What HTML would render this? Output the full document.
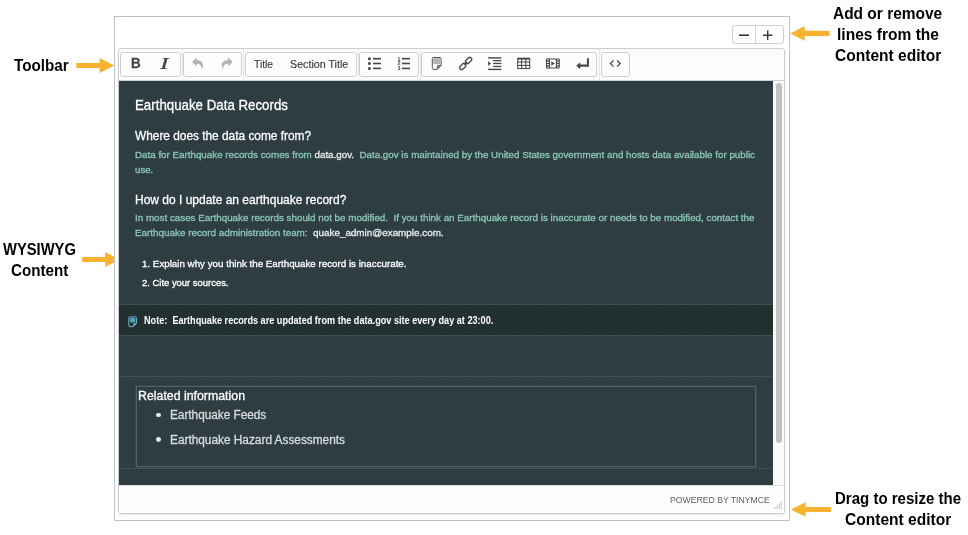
<!DOCTYPE html>
<html lang="en">
<head>
<meta charset="utf-8">
<title>Content editor</title>
<style>
html,body{margin:0;padding:0;background:#fff;}
body{width:968px;height:535px;position:relative;overflow:hidden;font-family:"Liberation Sans",sans-serif;}
#root{position:absolute;left:0;top:0;width:968px;height:535px;will-change:transform;}
.abs{position:absolute;box-sizing:border-box;}
.t{position:absolute;white-space:pre;line-height:1;transform-origin:0 50%;font-family:"Liberation Sans",sans-serif;}
#frame{left:114px;top:16px;width:676px;height:505px;border:1px solid #b9c3c8;background:#fff;}
#pm{left:732px;top:25px;width:52px;height:19px;border:1px solid #cfcfcf;border-radius:3px;background:#fff;}
#pm .div{position:absolute;left:22px;top:0;width:1px;height:17px;background:#d4d4d4;}
#editor{left:118px;top:48px;width:667px;height:466px;border:1px solid #cdcdcd;border-radius:3px;background:#fcfcfc;box-shadow:0 1px 2px rgba(0,0,0,0.12);}
#content{left:119px;top:81px;width:654px;height:404px;background:#2e3d41;}
#tbline{left:119px;top:80px;width:665px;height:1px;background:#cfcfcf;}
#scroll{left:773px;top:81px;width:11px;height:404px;background:#fafafa;}
#thumb{left:776px;top:83px;width:6px;height:360px;border-radius:3px;background:#c1c1c1;}
#status{left:119px;top:485px;width:665px;height:28px;background:#fcfcfc;border-top:1px solid #dcdcdc;}
.grp{position:absolute;box-sizing:border-box;top:52px;height:25px;border:1px solid #cfcfcf;border-radius:3px;background:#fdfdfd;}
.sep{position:absolute;top:49px;width:1px;height:31px;background:#e6e6e6;}
#note{left:119px;top:304px;width:654px;height:32px;background:#233032;}
.hline{position:absolute;left:119px;width:654px;height:1px;background:repeating-linear-gradient(90deg,#455356 0,#455356 2px,#3b494c 2px,#3b494c 3px);}
#rel{left:136px;top:386px;width:620px;height:81px;border:1px solid #536164;box-shadow:0 0 0 1px rgba(83,97,100,0.28);}
svg{position:absolute;overflow:visible;}
</style>
</head>
<body>
<div id="root">
<svg style="left:0;top:0" width="968" height="535" viewBox="0 0 968 535">
  <g fill="#f9b22e">
    <path d="M76.3 62.9H99.6V57.9L114.2 65.4L99.6 72.9V67.9H76.3Z"/>
    <path d="M82.2 256.9H105.2V251.9L119 259.4L105.2 266.9V261.9H82.2Z"/>
    <path d="M829.5 30.7H804.7V26.1L790.2 33.4L804.7 40.8V36.1H829.5Z"/>
    <path d="M830.9 507H805.6V502.2L790.8 509.5L805.6 516.8V512H830.9Z"/>
  </g>
</svg>

<div id="frame" class="abs"></div>

<!-- add / remove lines buttons -->
<div id="pm" class="abs"><div class="div"></div></div>
<svg style="left:732px;top:25px" width="52" height="19" viewBox="0 0 52 19">
  <path d="M7 10.2h10" stroke="#333" stroke-width="1.6" fill="none"/>
  <path d="M31 10.2h9.4M35.7 5.5v9.6" stroke="#333" stroke-width="1.4" fill="none"/>
</svg>

<!-- editor -->
<div id="editor" class="abs"></div>
<div id="tbline" class="abs"></div>
<div id="content" class="abs"></div>
<div id="scroll" class="abs"></div>
<div id="thumb" class="abs"></div>
<div id="status" class="abs"></div>

<!-- toolbar groups -->
<div class="grp" style="left:120px;width:61px"></div>
<div class="sep" style="left:182px"></div>
<div class="grp" style="left:183px;width:59px"></div>
<div class="sep" style="left:243px"></div>
<div class="grp" style="left:245px;width:112px"></div>
<div class="sep" style="left:358px"></div>
<div class="grp" style="left:359px;width:60px"></div>
<div class="sep" style="left:420px"></div>
<div class="grp" style="left:421px;width:176px"></div>
<div class="sep" style="left:599px"></div>
<div class="grp" style="left:601px;width:29px"></div>

<!-- content decorations -->
<div id="note" class="abs"></div>
<div class="hline" style="top:304px"></div>
<div class="hline" style="top:335px"></div>
<div class="hline" style="top:376px"></div>
<div class="hline" style="top:468px"></div>
<div id="rel" class="abs"></div>
<div class="abs" style="left:156px;top:412.5px;width:4.8px;height:4.8px;border-radius:50%;background:#e4e8e8"></div>
<div class="abs" style="left:156px;top:437.4px;width:4.8px;height:4.8px;border-radius:50%;background:#e4e8e8"></div>

<svg style="left:0;top:0" width="968" height="535" viewBox="0 0 968 535">
  <!-- undo / redo -->
  <g fill="#b3b3b3">
    <path transform="translate(192.1 57.3)" d="M0 4.6L4.6 0V2.9C8.6 2.9 11 5 11 8C11 9.8 10.3 11 9.4 12C9.8 9 8.4 6.4 4.6 6.4V9.2Z"/>
    <path transform="translate(232.7 57.3) scale(-1 1)" d="M0 4.6L4.6 0V2.9C8.6 2.9 11 5 11 8C11 9.8 10.3 11 9.4 12C9.8 9 8.4 6.4 4.6 6.4V9.2Z"/>
  </g>
  <!-- bullet list -->
  <g fill="#444" stroke="none">
    <circle cx="369.4" cy="58.7" r="1.5"/><circle cx="369.4" cy="63.5" r="1.5"/><circle cx="369.4" cy="68.4" r="1.5"/>
    <rect x="373" y="57.9" width="8" height="1.6"/><rect x="373" y="62.7" width="8" height="1.6"/><rect x="373" y="67.6" width="8" height="1.6"/>
  </g>
  <!-- numbered list -->
  <g fill="#444" stroke="none">
    <rect x="401.9" y="57.9" width="8.1" height="1.6"/><rect x="401.9" y="62.7" width="8.1" height="1.6"/><rect x="401.9" y="67.6" width="8.1" height="1.6"/>
    <g font-family="Liberation Sans, sans-serif" font-weight="700" font-size="5.4">
      <text x="397.4" y="60.6">1</text><text x="397.4" y="65.4">2</text><text x="397.4" y="70.3">3</text>
    </g>
  </g>
  <!-- note icon -->
  <g>
    <path d="M433.3 57.5H440.1Q441.1 57.5 441.1 58.5V65.3L437.2 69.4H433.3Q432.3 69.4 432.3 68.4V58.5Q432.3 57.5 433.3 57.5Z" fill="#fff" stroke="#555" stroke-width="1"/>
    <rect x="433.2" y="58.2" width="7.2" height="5.9" fill="#b4b4b4"/>
    <path d="M437.3 69.2V65.4H441Z" fill="#fff" stroke="#555" stroke-width="0.9" stroke-linejoin="round"/>
    <path d="M438.2 68.2L440.2 66.1H438.2Z" fill="#555"/>
  </g>
  <!-- link icon -->
  <g fill="none" stroke="#4a4a4a" stroke-width="1.3">
    <rect x="-3.6" y="-2" width="7.2" height="4" rx="2" transform="translate(468.6 60.5) rotate(-45)"/>
    <rect x="-3.6" y="-2" width="7.2" height="4" rx="2" transform="translate(462.8 66.5) rotate(-45)"/>
    <path d="M464.3 65L467.1 62.2" stroke-width="1.2"/>
  </g>
  <!-- indent -->
  <g fill="#444">
    <rect x="488.1" y="57.2" width="13.2" height="1.4"/>
    <rect x="493.2" y="60" width="8.1" height="1.3"/>
    <rect x="493.2" y="62.8" width="8.1" height="1.3"/>
    <rect x="493.2" y="65.8" width="8.1" height="1.3"/>
    <rect x="488.1" y="68.7" width="13.2" height="1.4"/>
    <path d="M488.1 61.2L491 63.5L488.1 65.8Z"/>
  </g>
  <!-- table -->
  <g fill="none" stroke="#444">
    <rect x="517.7" y="58.9" width="12" height="9.6" stroke-width="1"/>
    <path d="M517.2 58.5H530.2" stroke-width="1.6"/>
    <path d="M521.6 58.5V68.5M525.8 58.5V68.5M517.7 62H529.7M517.7 65.4H529.7" stroke-width="1"/>
  </g>
  <!-- media -->
  <g fill="none" stroke="#444" stroke-width="1.1">
    <rect x="546.5" y="59" width="12.7" height="9" rx="0.6"/>
    <path d="M549.4 59V68M556.4 59V68"/>
    <path d="M546.5 61.1H549.4M546.5 63.5H549.4M546.5 65.9H549.4M556.4 61.1H559.2M556.4 63.5H559.2M556.4 65.9H559.2" stroke-width="1.1"/>
    <path d="M551.3 61.3L554.8 63.5L551.3 65.7Z" fill="#444" stroke="none"/>
  </g>
  <!-- return -->
  <g fill="#444">
    <path d="M586.9 58.2H588.9V66.8H580.2V69.3L576.2 65.7L580.2 62.2V64.6H586.9Z"/>
  </g>
  <!-- code -->
  <g fill="none" stroke="#444" stroke-width="1.15">
    <path d="M613.6 60.5L610.3 63.5L613.6 66.6M617 60.5L620.3 63.5L617 66.6"/>
  </g>
  <!-- content note icon -->
  <g>
    <path d="M129.7 316.9H135.6Q136.5 316.9 136.5 317.8V323.3L133.3 326.6H129.7Q128.8 326.6 128.8 325.7V317.8Q128.8 316.9 129.7 316.9Z" fill="#243033" stroke="#6bb6cb" stroke-width="1"/>
    <rect x="130" y="318" width="5.4" height="4.4" fill="#5a9fb3"/>
    <path d="M133.3 326.4V323.3H136.4Z" fill="#6bb6cb"/>
  </g>
  <!-- resize grip -->
  <g fill="#b2b2b2">
    <rect x="780.6" y="501.6" width="1.2" height="1.2"/>
    <rect x="778.6" y="503.6" width="1.2" height="1.2"/><rect x="780.6" y="503.6" width="1.2" height="1.2"/>
    <rect x="776.6" y="505.6" width="1.2" height="1.2"/><rect x="778.6" y="505.6" width="1.2" height="1.2"/><rect x="780.6" y="505.6" width="1.2" height="1.2"/>
    <rect x="774.6" y="507.6" width="1.2" height="1.2"/><rect x="776.6" y="507.6" width="1.2" height="1.2"/><rect x="778.6" y="507.6" width="1.2" height="1.2"/><rect x="780.6" y="507.6" width="1.2" height="1.2"/>
  </g>
</svg>


<span class="t" style="left:135.0px;top:97.90px;font-size:14.3px;color:#ffffff;-webkit-text-stroke:0.3px;transform:scaleX(0.9300);">Earthquake Data Records</span>
<span class="t" style="left:135.0px;top:129.06px;font-size:13.4px;color:#ffffff;-webkit-text-stroke:0.3px;transform:scaleX(0.8856);">Where does the data come from?</span>
<span class="t" style="left:135.0px;top:149.79px;font-size:9.7px;color:#8cc7b6;-webkit-text-stroke:0.3px;transform:scaleX(1.0102);">Data for Earthquake records comes from <span style="color:#e9eded">data.gov.</span>  Data.gov is maintained by the United States government and hosts data available for public</span>
<span class="t" style="left:135.0px;top:164.79px;font-size:9.7px;color:#8cc7b6;-webkit-text-stroke:0.3px;">use.</span>
<span class="t" style="left:135.0px;top:193.46px;font-size:13.4px;color:#ffffff;-webkit-text-stroke:0.3px;transform:scaleX(0.8958);">How do I update an earthquake record?</span>
<span class="t" style="left:135.0px;top:212.79px;font-size:9.7px;color:#8cc7b6;-webkit-text-stroke:0.3px;transform:scaleX(1.0127);">In most cases Earthquake records should not be modified.  If you think an Earthquake record is inaccurate or needs to be modified, contact the</span>
<span class="t" style="left:135.0px;top:227.79px;font-size:9.7px;color:#8cc7b6;-webkit-text-stroke:0.3px;transform:scaleX(1.0174);">Earthquake record administration team:  <span style="color:#e9eded">quake_admin@example.com.</span></span>
<span class="t" style="left:141.5px;top:258.79px;font-size:9.7px;color:#ffffff;-webkit-text-stroke:0.3px;transform:scaleX(1.0086);">1. Explain why you think the Earthquake record is inaccurate.</span>
<span class="t" style="left:141.5px;top:278.49px;font-size:9.7px;color:#ffffff;-webkit-text-stroke:0.3px;transform:scaleX(0.9736);">2. Cite your sources.</span>
<span class="t" style="left:143.7px;top:316.37px;font-size:10.2px;color:#ffffff;font-weight:700;transform:scaleX(0.8954);">Note:  Earthquake records are updated from the data.gov site every day at 23:00.</span>
<span class="t" style="left:137.5px;top:389.99px;font-size:12.3px;color:#ffffff;-webkit-text-stroke:0.3px;transform:scaleX(1.0034);">Related information</span>
<span class="t" style="left:169.8px;top:408.84px;font-size:12.0px;color:#d9dddd;-webkit-text-stroke:0.3px;transform:scaleX(0.9810);">Earthquake Feeds</span>
<span class="t" style="left:169.8px;top:434.04px;font-size:12.0px;color:#d9dddd;-webkit-text-stroke:0.3px;transform:scaleX(0.9863);">Earthquake Hazard Assessments</span>
<span class="t" style="left:14.1px;top:57.04px;font-size:16.2px;color:#000;font-weight:700;transform:scaleX(0.9423);">Toolbar</span>
<span class="t" style="left:3.0px;top:241.19px;font-size:16.2px;color:#000;font-weight:700;transform:scaleX(0.9107);">WYSIWYG</span>
<span class="t" style="left:10.9px;top:262.09px;font-size:16.2px;color:#000;font-weight:700;transform:scaleX(0.9388);">Content</span>
<span class="t" style="left:833.0px;top:4.89px;font-size:16.2px;color:#000;font-weight:700;transform:scaleX(0.9558);">Add or remove</span>
<span class="t" style="left:837.0px;top:26.09px;font-size:16.2px;color:#000;font-weight:700;transform:scaleX(0.9610);">lines from the</span>
<span class="t" style="left:834.8px;top:47.09px;font-size:16.2px;color:#000;font-weight:700;transform:scaleX(0.9601);">Content editor</span>
<span class="t" style="left:834.8px;top:489.99px;font-size:16.2px;color:#000;font-weight:700;transform:scaleX(0.9275);">Drag to resize the</span>
<span class="t" style="left:844.8px;top:510.99px;font-size:16.2px;color:#000;font-weight:700;transform:scaleX(0.9601);">Content editor</span>
<span class="t" style="left:254.1px;top:59.97px;font-size:10.2px;color:#3a3a3a;-webkit-text-stroke:0.15px;transform:scaleX(1.0119);">Title</span>
<span class="t" style="left:289.7px;top:59.97px;font-size:10.2px;color:#3a3a3a;-webkit-text-stroke:0.15px;transform:scaleX(1.0486);">Section Title</span>
<span class="t" style="left:669.9px;top:494.97px;font-size:9.6px;color:#606060;transform:scaleX(0.9029);">POWERED BY TINYMCE</span>
<span class="t" style="left:130.7px;top:55.28px;font-size:15.5px;color:#444;font-weight:700;-webkit-text-stroke:0.3px;transform:scaleX(0.8658);">B</span>
<span class="t" style="left:160.4px;top:56.10px;font-size:16.6px;color:#444;font-style:italic;font-family:'Liberation Serif', serif;-webkit-text-stroke:0.22px;transform:scaleX(1.5548);">I</span>
</div>
</body>
</html>
